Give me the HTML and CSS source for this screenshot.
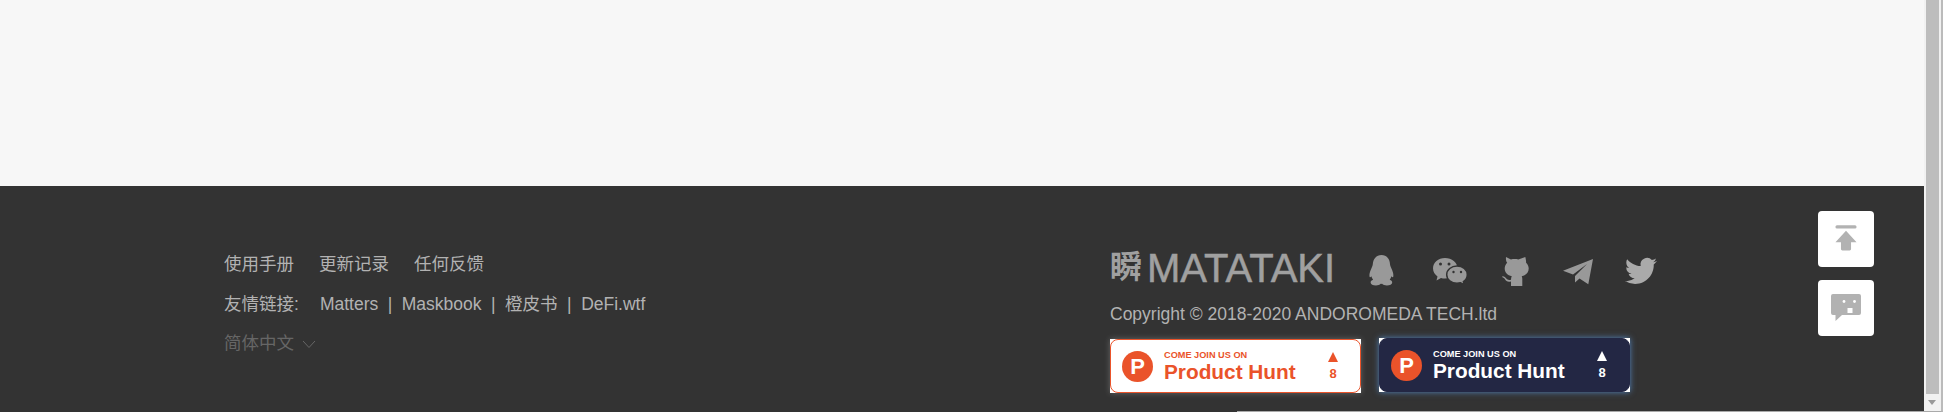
FILE: index.html
```html
<!DOCTYPE html>
<html lang="zh-CN">
<head>
    <meta charset="UTF-8">
    <meta name="viewport" content="width=device-width, initial-scale=1.0">
    <title>MATATAKI</title>
    <link rel="stylesheet" href="styles.css">
</head>
<body>
    <div class="page">
        <div class="content"></div>

        <footer class="footer">
            <div class="footer-left">
                <div class="link-row">
                    <a class="link">使用手册</a>
                    <a class="link">更新记录</a>
                    <a class="link">任何反馈</a>
                </div>
                <div class="link-row friends-row">
                    <span class="link">友情链接:</span>
                    <div class="friends">
                        <a class="link">Matters</a>
                        <span class="sep">|</span>
                        <a class="link">Maskbook</a>
                        <span class="sep">|</span>
                        <a class="link">橙皮书</a>
                        <span class="sep">|</span>
                        <a class="link">DeFi.wtf</a>
                    </div>
                </div>
                <div class="link-row lang">
                    <span>简体中文</span>
                    <svg class="chevron" viewBox="0 0 14 9"><path d="M1 1l6 6.5L13 1" fill="none" stroke="currentColor" stroke-width="1"/></svg>
                </div>
            </div>

            <div class="footer-right">
                <div class="brand-row">
                    <div class="brand"><span class="brand-cn">瞬</span><span class="brand-en">MATATAKI</span></div>
                    <div class="socials">
                        <svg class="social qq" viewBox="0 0 28 33"><path d="M14 0c5.500 0 8.600 4.200 8.800 9.300.1 1.700.6 2.700 1.400 4.300 1.300 2.600 2.300 5.500 2.100 8-.1 1.500-.8 1.700-2 .4-.3 1.300-.9 2.500-1.800 3.500 1.500.6 2.600 1.500 2.600 2.900 0 1.900-2.500 3.100-5.500 3.100-2.200 0-4-.6-5-1.700-.4.100-1 .100-1.400 0-1 1.100-2.800 1.700-5 1.700-3 0-5.500-1.200-5.500-3.100 0-1.400 1.100-2.300 2.600-2.900-.9-1-1.500-2.200-1.800-3.500-1.200 1.300-1.900 1.100-2-.4-.2-2.500.8-5.400 2.100-8 .8-1.600 1.300-2.600 1.400-4.300C5.400 4.200 8.500 0 14 0z"/></svg>
                        <svg class="social wechat" viewBox="0 0 36 28">
                            <path d="M13 1c6.800 0 12.500 4.500 12.500 10.300 0 5.800-5.700 10.300-12.500 10.300-1.400 0-2.800-.2-4-.6L4.500 23.500l1-4C2.800 17.600 1 14.700 1 11.300 1 5.500 6.200 1 13 1z"/>
                            <path class="wechat-small" d="M25 9c5.700 0 10.300 3.900 10.300 8.700 0 2.800-1.500 5.200-3.900 6.800l.8 3.200-3.700-2c-1.100.3-2.300.5-3.500.5-5.700 0-10.300-3.800-10.300-8.500C14.700 12.900 19.300 9 25 9z"/>
                            <circle class="eye" cx="8.500" cy="7" r="1.500"/>
                            <circle class="eye" cx="17" cy="7" r="1.500"/>
                            <circle class="eye" cx="21.500" cy="15" r="1.200"/>
                            <circle class="eye" cx="29" cy="15" r="1.200"/>
                        </svg>
                        <svg class="social github" viewBox="0 0 28 30"><path d="M5 1l5 2.400c2.300-.5 5-.5 7.300 0L24.300 1c.6 2.500.9 4.500.8 5.800 1.700 1.700 2.600 3.700 2.600 5.700 0 3.900-2.700 6.800-7 7.800.3.700.6 1.400.6 2.400V30H10v-4.500c-3.300 1-5-.5-6-2.200-.6-1-1.500-1.700-3-2.300l.6-.8c1.800.2 2.800 1.200 3.700 2.400.9 1.200 2.500 1.600 4.700 1.100 0-1.400.200-2.500.800-3.400-4.300-1-7.100-3.900-7.100-7.800 0-2 .8-4 2.500-5.700C5.100 5.500 4.700 3.600 5 1z"/></svg>
                        <svg class="social telegram" viewBox="0 0 32 27"><path d="M31 1L1 12.700 11 16.500 25 6 13 18v6.500l4.500-4 8.800 5.800z"/></svg>
                        <svg class="social twitter" viewBox="0 0 24 24"><path d="M23.953 4.570a10 10 0 01-2.825.775 4.958 4.958 0 002.163-2.723c-.951.555-2.005.959-3.127 1.184a4.920 4.920 0 00-8.384 4.482C7.690 8.095 4.067 6.130 1.640 3.162a4.822 4.822 0 00-.666 2.475c0 1.710.870 3.213 2.188 4.096a4.904 4.904 0 01-2.228-.616v.060a4.923 4.923 0 003.946 4.827 4.996 4.996 0 01-2.212.085 4.936 4.936 0 004.604 3.417 9.867 9.867 0 01-6.102 2.105c-.390 0-.779-.023-1.170-.067a13.995 13.995 0 007.557 2.209c9.053 0 13.998-7.496 13.998-13.985 0-.210 0-.420-.015-.630A9.935 9.935 0 0024 4.590z"/></svg>
                    </div>
                </div>

                <div class="copyright">Copyright © 2018-2020 ANDOROMEDA TECH.ltd</div>

                <div class="badges">
                    <div class="ph-badge ph-light">
                        <div class="ph-inner">
                            <span class="ph-logo">P</span>
                            <div class="ph-text">
                                <span class="ph-small">COME JOIN US ON</span>
                                <span class="ph-name">Product Hunt</span>
                            </div>
                            <div class="ph-votes">
                                <span class="ph-arrow"></span>
                                <span class="ph-count">8</span>
                            </div>
                        </div>
                    </div>
                    <div class="ph-badge ph-dark">
                        <div class="ph-inner">
                            <span class="ph-logo">P</span>
                            <div class="ph-text">
                                <span class="ph-small">COME JOIN US ON</span>
                                <span class="ph-name">Product Hunt</span>
                            </div>
                            <div class="ph-votes">
                                <span class="ph-arrow"></span>
                                <span class="ph-count">8</span>
                            </div>
                        </div>
                    </div>
                </div>
            </div>

            <div class="float-buttons">
                <button class="float-btn">
                    <svg viewBox="0 0 24 30" class="float-icon"><rect x="0.500" y="0" width="23" height="3.500" rx="1.700"/><path d="M12 6l11.500 12.500H17.500V26a1.500 1.500 0 01-1.500 1.500H8A1.500 1.500 0 016.500 26v-7.500H.500z"/></svg>
                </button>
                <button class="float-btn">
                    <svg viewBox="0 0 30 28" class="float-icon feedback"><path d="M2 0h26a2 2 0 012 2v17a2 2 0 01-2 2H11l-6.500 6v-6H2a2 2 0 01-2-2V2a2 2 0 012-2z"/><circle class="hole" cx="13" cy="7.500" r="1.400"/><circle class="hole" cx="23.500" cy="7.500" r="1.400"/><rect class="hole" x="16.500" y="14" width="5" height="5"/></svg>
                </button>
            </div>
        </footer>

        <div class="bottom-line"></div>
    </div>

    <div class="scrollbar">
        <div class="scroll-thumb"></div>
        <div class="scroll-arrow"></div>
    </div>
</body>
</html>
```

FILE: styles.css
```css
html, body {
    height: 100%;
    margin: 0;
    overflow: hidden;
}
body {
    display: flex;
    font-family: "Liberation Sans", "Noto Sans CJK SC", sans-serif;
    font-size: 17.500px;
    color: #b2b2b2;
    background: #f7f7f7;
}
.page {
    position: relative;
    flex: 1;
    display: flex;
    flex-direction: column;
    min-width: 0;
}
.content {
    height: 186px;
    background: #f7f7f7;
}
.footer {
    position: relative;
    flex: 1;
    display: flex;
    padding: 58px 0 0 224px;
    background: #333;
}
.footer-left {
    width: 886px;
}
.link-row {
    display: flex;
    align-items: baseline;
    gap: 25px;
    height: 40px;
    line-height: 40px;
}
.friends-row {
    gap: 21px;
}
.link {
    color: #b2b2b2;
    white-space: nowrap;
}
.friends {
    display: flex;
    align-items: baseline;
    gap: 9.500px;
}
.sep {
    color: #b2b2b2;
}
.lang {
    gap: 8px;
    color: #666;
    margin-top: -1px;
}
.chevron {
    width: 14px;
    height: 9px;
}

.footer-right {
    margin-top: 6px;
}
.brand-row {
    display: flex;
    align-items: center;
    height: 36px;
}
.brand {
    display: flex;
    align-items: center;
    gap: 5px;
    width: 258px;
    color: #a0a0a0;
    white-space: nowrap;
}
.brand-cn {
    font-size: 32px;
    font-weight: 700;
    line-height: 36px;
    margin-top: -2px;
}
.brand-en {
    font-size: 40px;
    line-height: 36px;
    -webkit-text-stroke: 0.500px #a0a0a0;
}
.socials {
    display: flex;
    align-items: center;
    margin-top: 6px;
}
.social {
    display: block;
    fill: #999;
}
.qq {
    width: 27px;
    height: 32px;
    margin-right: 37px;
}
.wechat {
    width: 36px;
    height: 28px;
    margin-right: 33px;
}
.github {
    width: 28px;
    height: 30px;
    margin-right: 33px;
}
.telegram {
    width: 32px;
    height: 27px;
    margin-right: 31px;
}
.twitter {
    width: 32px;
    height: 32px;
    fill: #aaa;
}
.wechat-small {
    stroke: #333;
    stroke-width: 1.500;
}
.eye {
    fill: #333;
}
.copyright {
    margin-top: 17px;
    line-height: 22px;
    white-space: nowrap;
}
.badges {
    display: flex;
    gap: 18px;
    margin-top: 14px;
}

.ph-badge {
    width: 251px;
    height: 54px;
    background: #fff;
}
.ph-light {
    box-shadow: 0 0 6px rgba(255,255,255,0.25);
    color: #ea532a;
}
.ph-dark {
    box-shadow: 0 0 6px rgba(90,150,220,0.8);
    color: #fff;
    margin-top: -1px;
}
.ph-inner {
    display: flex;
    align-items: center;
    box-sizing: border-box;
    height: 100%;
    padding: 0 0 0 11px;
    border-radius: 8px;
    border: 1px solid #ea532a;
}
.ph-dark .ph-inner {
    background: #232744;
    border-color: #232744;
}
.ph-logo {
    flex: none;
    width: 31px;
    height: 31px;
    border-radius: 50%;
    background: #ea532a;
    color: #fff;
    font-size: 22px;
    font-weight: 700;
    line-height: 31px;
    text-align: center;
}
.ph-text {
    display: flex;
    flex-direction: column;
    width: 158px;
    margin-left: 11px;
}
.ph-small {
    font-size: 9.200px;
    font-weight: 700;
    line-height: 12px;
}
.ph-name {
    margin-top: -1px;
    font-size: 20.800px;
    font-weight: 700;
    line-height: 23px;
    white-space: nowrap;
}
.ph-votes {
    display: flex;
    flex-direction: column;
    align-items: center;
    gap: 4px;
    width: 22px;
}
.ph-arrow {
    width: 0;
    height: 0;
    border-left: 5.500px solid transparent;
    border-right: 5.500px solid transparent;
    border-bottom: 10px solid currentColor;
}
.ph-count {
    font-size: 13px;
    font-weight: 700;
    line-height: 15px;
}

.float-buttons {
    position: absolute;
    top: 25px;
    left: 1818px;
    display: flex;
    flex-direction: column;
    gap: 13px;
}
.float-btn {
    display: flex;
    align-items: center;
    justify-content: center;
    width: 56px;
    height: 56px;
    padding: 0;
    border: none;
    border-radius: 4px;
    background: #fff;
}
.float-icon {
    width: 22px;
    height: 28px;
    fill: #b2b2b2;
}
.feedback {
    width: 30px;
    height: 28px;
}
.hole {
    fill: #fff;
}
.bottom-line {
    position: absolute;
    left: 1237px;
    right: 0;
    bottom: 0;
    height: 1px;
    background: #aaa;
}

.scrollbar {
    position: relative;
    flex: none;
    width: 19px;
    box-sizing: border-box;
    border-right: 2px solid #bbb;
    border-bottom: 1px solid #aaa;
    background: #f1f1f1;
}
.scroll-thumb {
    height: 394px;
    margin: 0 2px;
    background: #bdbdbd;
}
.scroll-arrow {
    width: 0;
    height: 0;
    margin: 6px 0 0 4px;
    border-left: 4px solid transparent;
    border-right: 4px solid transparent;
    border-top: 5px solid #999;
}
```
